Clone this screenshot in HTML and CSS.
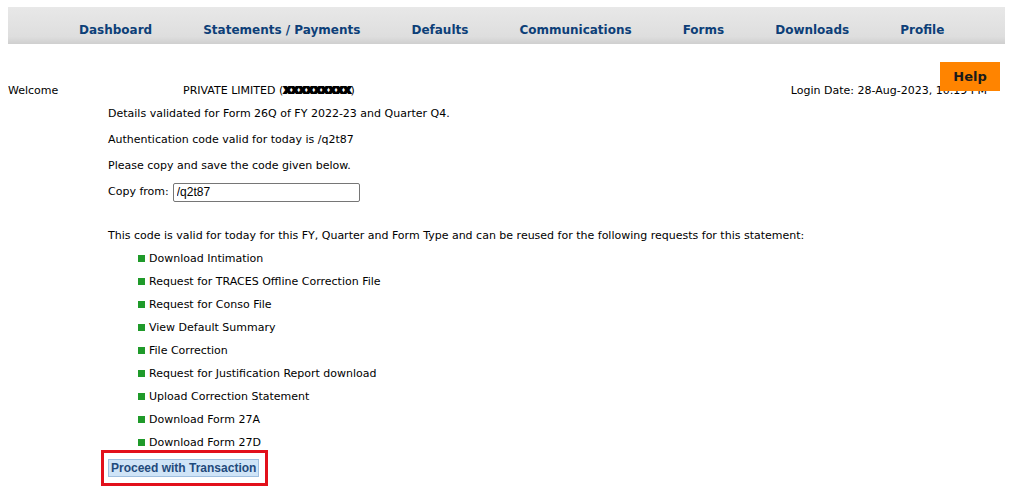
FILE: index.html
```html
<html>

<head>
    <link rel="stylesheet" href="styles.css">
</head>

<body>
    <div class="menu">
        <a href="#">Dashboard</a>
        <a href="#">Statements / Payments</a>
        <a href="#">Defaults</a>
        <a href="#">Communications</a>
        <a href="#">Forms</a>
        <a href="#">Downloads</a>
        <a href="#">Profile</a>
    </div>

    <a class="help" href="#">Help</a>

    <div class="welcome">
        <span class="welcome-label">Welcome</span>
        <span class="company">PRIVATE LIMITED (<span class="masked">XXXXXXXXX</span>)</span>
        <span class="login-date">Login Date: 28-Aug-2023, 10:19 PM</span>
    </div>

    <div class="content">
        <p class="first">Details validated for Form 26Q of FY 2022-23 and Quarter Q4.</p>
        <p>Authentication code valid for today is /q2t87</p>
        <p>Please copy and save the code given below.</p>
        <p class="copy">Copy from: <input type="text" value="/q2t87" readonly></p>

        <p class="valid">This code is valid for today for this FY, Quarter and Form Type and can be reused for the following requests for this statement:</p>
        <ul class="requests">
            <li>Download Intimation</li>
            <li>Request for TRACES Offline Correction File</li>
            <li>Request for Conso File</li>
            <li>View Default Summary</li>
            <li>File Correction</li>
            <li>Request for Justification Report download</li>
            <li>Upload Correction Statement</li>
            <li>Download Form 27A</li>
            <li>Download Form 27D</li>
        </ul>

        <div class="proceed-box">
            <button class="proceed">Proceed with Transaction</button>
        </div>
    </div>
</body>

</html>
```

FILE: styles.css
```css
body {
    margin: 7px 8px 0 8px;
    font-family: "DejaVu Sans", Verdana, sans-serif;
    font-size: 11px;
    color: #000;
    background: #fff;
}

.menu {
    display: flex;
    gap: 51px;
    width: 997px;
    height: 37px;
    box-sizing: border-box;
    padding-left: 71px;
    align-items: center;
    background: linear-gradient(#e8e8e8, #dedede 80%, #cfcfcf);
}

.menu a {
    font-size: 12px;
    font-weight: bold;
    color: #0d3f78;
    text-decoration: none;
    padding-top: 9px;
}

.help {
    position: absolute;
    top: 62px;
    left: 940px;
    width: 60px;
    height: 29px;
    line-height: 30px;
    text-align: center;
    background: #ff8400;
    color: #1a1a1a;
    font-size: 13px;
    font-weight: bold;
    text-decoration: none;
}

.welcome {
    display: flex;
    margin-top: 39px;
    height: 16px;
    line-height: 16px;
    width: 979px;
}

.welcome-label {
    width: 175px;
}

.company {
    flex: 1;
}

.masked {
    font-weight: bold;
    letter-spacing: -1px;
    color: #000;
    text-shadow: 1px 0 #000, -1px 0 #000;
}

.content {
    margin-left: 100px;
}

.content p {
    margin: 0 0 10px 0;
    line-height: 16px;
}

.content p.first {
    margin-top: 7px;
}

.content p.copy {
    display: flex;
    align-items: center;
    gap: 4px;
    height: 20px;
    margin-top: -2px;
}

.copy input {
    width: 187px;
    height: 19px;
    border: 1px solid #767676;
    border-radius: 2px;
    padding: 0 3px;
    font-family: "Liberation Sans", Arial, sans-serif;
    font-size: 12px;
}

.content p.valid {
    margin-top: 26px;
    margin-bottom: 7px;
}

.requests {
    list-style: none;
    margin: 0;
    padding-left: 30px;
}

.requests li {
    height: 23px;
    line-height: 16px;
}

.requests li::before {
    content: "";
    display: inline-block;
    width: 7px;
    height: 7px;
    background: #1f9a2a;
    margin-right: 4px;
}

.proceed-box {
    display: inline-flex;
    margin: -8px 0 0 -7px;
    padding: 6px 6px 6px 4px;
    border: 3px solid #e2101b;
}

.proceed {
    font-family: "Liberation Sans", Arial, sans-serif;
    font-size: 12px;
    font-weight: bold;
    color: #1f4a7c;
    background: #cfe4f7;
    border: 1px solid #9fbfdf;
    padding: 1px 2px;
    height: 18px;
}
```
